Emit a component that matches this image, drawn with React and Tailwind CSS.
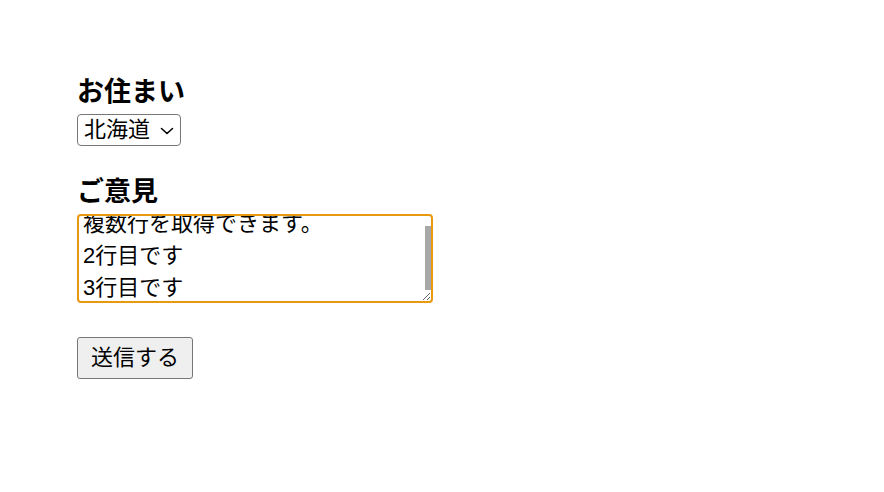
import React, { useEffect, useRef } from "react";

const opinion = "テキストエリアでは\n複数行を取得できます。\n2行目です\n3行目です";

export default function App() {
  const areaRef = useRef(null);

  useEffect(() => {
    const el = areaRef.current;
    if (!el) return;
    el.focus();
    el.setSelectionRange(opinion.length, opinion.length);
    // scrolled near the bottom, like the screenshot
    el.scrollTop = el.scrollHeight - el.clientHeight - 3;
  }, []);

  return (
    <div className="min-h-screen bg-white px-[77px] pt-[76px] text-black font-['Liberation_Sans','Noto_Sans_CJK_JP',sans-serif]">
      <form onSubmit={(e) => e.preventDefault()}>
        {/* お住まい */}
        <div>
          <label className="block text-[27px] font-bold leading-[32px]">お住まい</label>
          <div className="relative mt-[6px] w-[104px]">
            <select
              defaultValue="hokkaido"
              className="block h-[32px] w-[104px] appearance-none rounded-[4px] border border-[#767676] bg-white pl-[6px] text-[22px] leading-[30px] outline-none"
            >
              <option value="hokkaido">北海道</option>
              <option value="aomori">青森県</option>
              <option value="tokyo">東京都</option>
            </select>
            <svg
              className="pointer-events-none absolute right-[7px] top-[13px]"
              width="14"
              height="8"
              viewBox="0 0 14 8"
              fill="none"
            >
              <path d="M1.5 1.5 L7 6.5 L12.5 1.5" stroke="#000" strokeWidth="1.6" strokeLinecap="round" strokeLinejoin="round" />
            </svg>
          </div>
        </div>

        {/* ご意見 */}
        <div className="mt-[30px]">
          <label className="block text-[27px] font-bold leading-[32px]">ご意見</label>
          <div className="relative mt-[6px] w-[356px]">
            <textarea
              ref={areaRef}
              defaultValue={opinion}
              className="block h-[89px] w-[356px] overflow-hidden rounded-[4px] border-2 border-[#e8990f] px-[4px] py-0 text-[22px] leading-[32px] caret-black outline-none"
            />
            {/* scrollbar thumb */}
            <div className="pointer-events-none absolute right-[2px] top-[12px] h-[64px] w-[6px] bg-[#a8a8a8]" />
          </div>
        </div>

        <button
          type="submit"
          className="mt-[34px] block h-[42px] w-[116px] rounded-[3px] border border-[#767676] bg-[#efefef] text-[22px] leading-[40px]"
        >
          送信する
        </button>
      </form>
    </div>
  );
}
